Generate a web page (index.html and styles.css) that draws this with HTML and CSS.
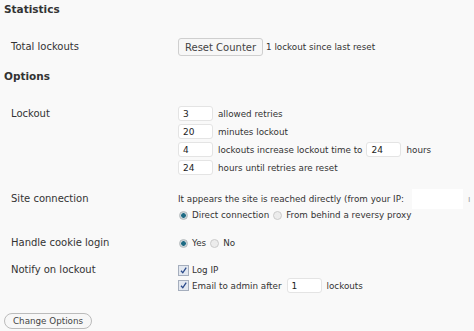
FILE: index.html
```html
<!DOCTYPE html>
<html>
<head>
<meta charset="utf-8">
<link rel="stylesheet" href="styles.css">
</head>
<body>
<div class="page">
  <h3 class="heading">Statistics</h3>
  <div class="row row-stats">
    <div class="label label-btn">Total lockouts</div>
    <div class="field">
      <div class="line line-btn"><span class="btn">Reset Counter</span><span class="note">1 lockout since last reset</span></div>
    </div>
  </div>
  <h3 class="heading heading-options">Options</h3>
  <div class="row row-lockout">
    <div class="label label-input">Lockout</div>
    <div class="field stack-inputs">
      <div class="line line-input"><span class="input">3</span><span class="txt">allowed retries</span></div>
      <div class="line line-input"><span class="input">20</span><span class="txt">minutes lockout</span></div>
      <div class="line line-input"><span class="input">4</span><span class="txt">lockouts increase lockout time to</span><span class="input">24</span><span class="txt">hours</span></div>
      <div class="line line-input"><span class="input">24</span><span class="txt">hours until retries are reset</span></div>
    </div>
  </div>
  <div class="row row-site">
    <div class="label label-site">Site connection</div>
    <div class="field">
      <div class="line line-site">It appears the site is reached directly (from your IP:<span class="redact"></span><span class="tail">ı</span></div>
      <div class="line line-radio"><span class="radio on"></span><span class="rtxt">Direct connection</span><span class="radio"></span><span class="rtxt">From behind a reversy proxy</span></div>
    </div>
  </div>
  <div class="row row-cookie">
    <div class="label label-radio">Handle cookie login</div>
    <div class="field">
      <div class="line line-radio"><span class="radio on"></span><span class="rtxt">Yes</span><span class="radio"></span><span class="rtxt">No</span></div>
    </div>
  </div>
  <div class="row row-notify">
    <div class="label label-check">Notify on lockout</div>
    <div class="field">
      <div class="line line-check"><span class="check"><svg viewBox="0 0 11 11" width="11" height="11"><path d="M3 5.8 L4.8 7.8 L8.2 2.6" fill="none" stroke="#2b4a8a" stroke-width="1.3"/></svg></span><span class="ctxt">Log IP</span></div>
      <div class="line line-input"><span class="check"><svg viewBox="0 0 11 11" width="11" height="11"><path d="M3 5.8 L4.8 7.8 L8.2 2.6" fill="none" stroke="#2b4a8a" stroke-width="1.3"/></svg></span><span class="ctxt">Email to admin after</span><span class="input">1</span><span class="txt">lockouts</span></div>
    </div>
  </div>
  <div class="submit"><span class="btn btn-pill">Change Options</span></div>
</div>
</body>
</html>
```
FILE: styles.css
```css
html, body {
  margin: 0;
  padding: 0;
  background: #f9f9f9;
}
body {
  width: 474px;
  height: 331px;
  overflow: hidden;
  font-family: "DejaVu Sans", Verdana, sans-serif;
  font-size: 8.75px;
  color: #333;
}
.page {
  padding: 0 0 0 4px;
}
.heading {
  margin: 0;
  font-size: 10.5px;
  line-height: 18px;
  font-weight: bold;
  color: #333;
}
.heading-options {
  margin-top: 11px;
}
.row {
  display: grid;
  grid-template-columns: 174px 1fr;
}
.label {
  padding-left: 7px;
  color: #333;
  font-size: 10px;
}
.label-btn { line-height: 18px; }
.label-input { line-height: 15px; }
.label-site { line-height: 18px; }
.label-radio { line-height: 14px; }
.label-check { line-height: 16px; }
.row-stats { margin-top: 20px; }
.row-lockout { margin-top: 21px; }
.row-site { margin-top: 15px; }
.row-cookie { margin-top: 14px; }
.row-notify { margin-top: 12px; }
.field {
  display: flex;
  flex-direction: column;
}
.stack-inputs { gap: 3px; }
.line {
  display: flex;
  align-items: center;
  white-space: nowrap;
}
.line-btn { height: 18px; }
.line-input { height: 15px; }
.line-site { height: 18px; }
.line-radio { height: 14px; }
.line-check { height: 16px; }
.btn {
  display: inline-flex;
  align-items: center;
  box-sizing: border-box;
  height: 18px;
  padding: 0 6px;
  border: 1px solid #cfcfcf;
  border-radius: 3px;
  background: #f7f7f7;
  color: #444;
  font-size: 10px;
}
.note {
  margin-left: 3px;
  font-size: 8.75px;
}
.input {
  display: inline-flex;
  align-items: center;
  box-sizing: border-box;
  width: 35px;
  height: 15px;
  padding-left: 4px;
  background: #fff;
  border: 1px solid #e4e4e4;
  border-radius: 3px;
  color: #222;
  font-size: 9px;
}
.txt {
  margin: 0 4px 0 5px;
}
.redact {
  display: inline-block;
  width: 51px;
  height: 20px;
  margin: 0 0 0 8px;
  background: #fff;
}
.tail {
  margin-left: 5px;
  color: #999;
}
.radio {
  display: inline-block;
  box-sizing: border-box;
  width: 9px;
  height: 9px;
  border-radius: 50%;
  border: 1px solid #cbcbcb;
  background: #ececec;
  margin-left: 1px;
}
.radio.on {
  background: radial-gradient(circle, #1d6a84 0, #1d6a84 2px, #c9d3d8 2.6px);
  border-color: #b3b9bc;
}
.rtxt {
  margin: 0 3px 0 4px;
}
.check {
  display: inline-block;
  width: 11px;
  height: 11px;
  box-sizing: border-box;
  border: 1px solid #a5aebd;
  background: #e3e8f0;
  position: relative;
}
.check svg {
  position: absolute;
  left: -1px;
  top: -1px;
}
.ctxt {
  margin: 0 5px 0 3px;
}
.submit {
  margin-top: 20px;
}
.btn-pill {
  height: 16px;
  border-radius: 8px;
  padding: 0 8px;
  font-size: 8.75px;
  border-color: #bbb;
}
```
